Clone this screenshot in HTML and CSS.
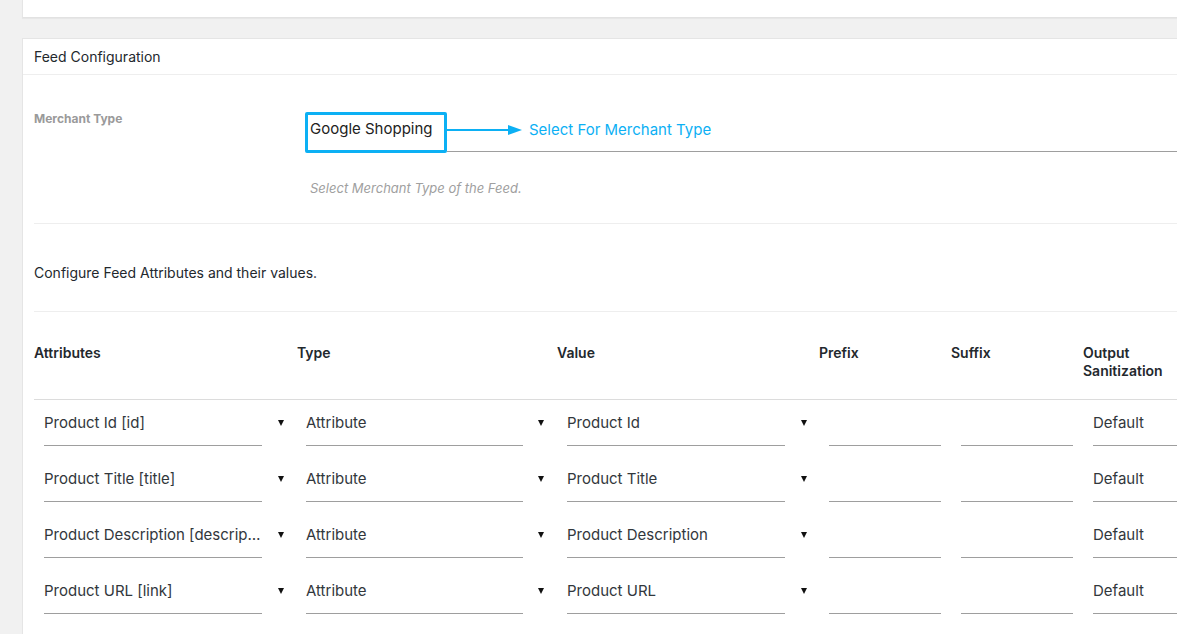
FILE: index.html
```html
<!DOCTYPE html>
<html>
<head>
<meta charset="utf-8">
<link rel="stylesheet" href="styles.css">
</head>
<body>
<div class="page">
  <div class="topcard"></div>
  <div class="card">
    <div class="card-header">Feed Configuration</div>
    <div class="card-body">
      <div class="merchant-row">
        <div class="label">Merchant Type</div>
        <div class="merchant-field">
          <div class="select-line">
            <div class="highlight-box">Google Shopping</div>
            <div class="callout">
              <svg class="callout-arrow" width="78" height="12" viewBox="0 0 78 12"><line x1="0" y1="6" x2="64" y2="6" stroke="#0cb0f4" stroke-width="2"/><polygon points="62,1 76,6 62,11" fill="#0cb0f4"/></svg>
              <span class="callout-text">Select For Merchant Type</span>
            </div>
          </div>
          <div class="desc">Select Merchant Type of the Feed.</div>
        </div>
      </div>
      <hr class="sep">
      <p class="intro">Configure Feed Attributes and their values.</p>
      <hr class="sep">
      <div class="table">
        <div class="thead">
          <div class="th">Attributes</div>
          <div class="th">Type</div>
          <div class="th">Value</div>
          <div class="th">Prefix</div>
          <div class="th">Suffix</div>
          <div class="th">Output<br>Sanitization</div>
        </div>
        <div class="tbody">
          <div class="tr">
            <div class="td"><div class="sel"><span class="val">Product Id [id]</span></div><span class="caret"></span></div>
            <div class="td tight"><div class="sel"><span class="val">Attribute</span></div><span class="caret"></span></div>
            <div class="td"><div class="sel"><span class="val">Product Id</span></div><span class="caret"></span></div>
            <div class="td"><div class="inp"></div></div>
            <div class="td"><div class="inp"></div></div>
            <div class="td"><div class="out">Default</div></div>
          </div>
          <div class="tr">
            <div class="td"><div class="sel"><span class="val">Product Title [title]</span></div><span class="caret"></span></div>
            <div class="td tight"><div class="sel"><span class="val">Attribute</span></div><span class="caret"></span></div>
            <div class="td"><div class="sel"><span class="val">Product Title</span></div><span class="caret"></span></div>
            <div class="td"><div class="inp"></div></div>
            <div class="td"><div class="inp"></div></div>
            <div class="td"><div class="out">Default</div></div>
          </div>
          <div class="tr">
            <div class="td"><div class="sel"><span class="val">Product Description [descrip…</span></div><span class="caret"></span></div>
            <div class="td tight"><div class="sel"><span class="val">Attribute</span></div><span class="caret"></span></div>
            <div class="td"><div class="sel"><span class="val">Product Description</span></div><span class="caret"></span></div>
            <div class="td"><div class="inp"></div></div>
            <div class="td"><div class="inp"></div></div>
            <div class="td"><div class="out">Default</div></div>
          </div>
          <div class="tr">
            <div class="td"><div class="sel"><span class="val">Product URL [link]</span></div><span class="caret"></span></div>
            <div class="td tight"><div class="sel"><span class="val">Attribute</span></div><span class="caret"></span></div>
            <div class="td"><div class="sel"><span class="val">Product URL</span></div><span class="caret"></span></div>
            <div class="td"><div class="inp"></div></div>
            <div class="td"><div class="inp"></div></div>
            <div class="td"><div class="out">Default</div></div>
          </div>
        </div>
      </div>
    </div>
  </div>
</div>
</body>
</html>
```

FILE: styles.css
```css
* { box-sizing: border-box; }
html, body { margin: 0; padding: 0; }
body {
  background: #f1f1f1;
  font-family: Inter, "Liberation Sans", Arial, sans-serif;
  color: #23282d;
  font-size: 14px;
  overflow: hidden;
}
.page {
  padding-left: 22px;
  width: 1200px;
}
.topcard {
  height: 18px;
  background: #fff;
  border-left: 1px solid #e5e5e5;
  border-bottom: 1px solid #e2e2e2;
  box-shadow: 0 1px 1px rgba(0,0,0,0.04);
}
.card {
  margin-top: 20px;
  background: #fff;
  border: 1px solid #e5e5e5;
  border-right: none;
  height: 700px;
}
.card-header {
  height: 36px;
  padding: 9px 12px 0 11px;
  line-height: 18px;
  font-size: 14px;
  color: #23282d;
  border-bottom: 1px solid #eeeeee;
}
.card-body {
  padding-left: 11px;
}
.merchant-row {
  display: grid;
  grid-template-columns: 271px 1fr;
  padding-top: 38px;
}
.label {
  font-size: 12px;
  font-weight: bold;
  color: #9a9a9a;
  line-height: 16px;
  margin-top: -2px;
}
.select-line {
  display: flex;
  align-items: stretch;
  height: 41px;
  margin-top: -1px;
}
.highlight-box {
  width: 142px;
  height: 41px;
  border: 3px solid #0cb0f4;
  border-radius: 2px;
  padding: 5px 0 0 2px;
  line-height: 18px;
  font-size: 15px;
  color: #222;
  white-space: nowrap;
}
.callout {
  flex: 1;
  display: flex;
  align-items: flex-start;
  border-bottom: 1px solid #9e9e9e;
  margin-bottom: 1px;
}
.callout-arrow {
  margin-top: 12px;
  margin-left: -1px;
  flex: none;
}
.callout-text {
  margin-left: 5px;
  margin-top: 9px;
  color: #0cb0f4;
  font-size: 15px;
  line-height: 18px;
}
.desc {
  margin-top: 27px;
  padding-left: 5px;
  font-size: 13px;
  font-style: italic;
  color: #a0a0a0;
  line-height: 16px;
}
.sep {
  border: 0;
  border-top: 1px solid #eeeeee;
  margin: 0;
}
.merchant-row + .sep { margin-top: 27px; }
.intro {
  margin: 0;
  padding: 40px 0 29px;
  line-height: 18px;
  font-size: 14px;
  color: #23282d;
}
.thead {
  display: grid;
  grid-template-columns: 263px 260px 262px 132px 132px 1fr;
  padding: 32px 0 19px;
  border-bottom: 1px solid #dcdcdc;
}
.th {
  font-weight: 600;
  font-size: 14px;
  line-height: 18px;
  color: #23282d;
}
.tr {
  display: grid;
  grid-template-columns: 263px 260px 262px 132px 132px 1fr;
  height: 56px;
  padding-top: 8px;
}
.td {
  padding-left: 10px;
  display: flex;
  align-items: flex-start;
}
.td.tight {
  padding-left: 9px;
}
.td.tight .sel {
  width: 217px;
}
.td.tight .caret {
  margin-left: 15px;
}
.sel {
  width: 218px;
  height: 38px;
  border-bottom: 1px solid #9e9e9e;
  padding-top: 6px;
  line-height: 18px;
  font-size: 15px;
  color: #32373c;
  white-space: nowrap;
  overflow: hidden;
}
.val {
  display: block;
  overflow: hidden;
  white-space: nowrap;
}
.caret {
  margin-left: 16px;
  margin-top: 12px;
  width: 0;
  height: 0;
  border-left: 3.5px solid transparent;
  border-right: 3.5px solid transparent;
  border-top: 6px solid #111;
}
.inp {
  width: 112px;
  height: 38px;
  border-bottom: 1px solid #9e9e9e;
}
.out {
  flex: 1;
  height: 38px;
  border-bottom: 1px solid #9e9e9e;
  padding-top: 6px;
  line-height: 18px;
  font-size: 15px;
  color: #32373c;
}
```
